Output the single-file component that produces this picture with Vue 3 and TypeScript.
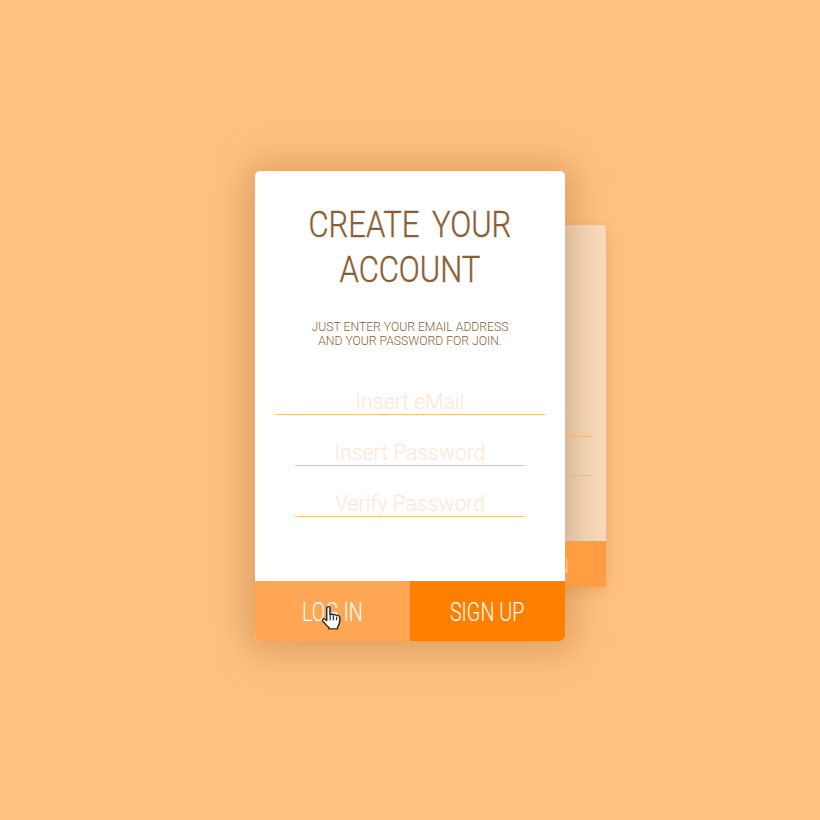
<script setup lang="ts">
const fields: { label: string; wide: boolean }[] = [
  { label: 'Insert eMail', wide: true },
  { label: 'Insert Password', wide: false },
  { label: 'Verify Password', wide: false },
]
</script>

<template>
  <main class="page">
    <section class="stack">
      <aside class="back-card">
        <div class="back-body">
          <span class="back-line first"></span>
          <span class="back-line second"></span>
        </div>
        <div class="back-foot"><span class="back-letter">N</span></div>
      </aside>
      <article class="card">
        <div class="body">
          <h1 class="title"><span>CREATE YOUR</span><span>ACCOUNT</span></h1>
          <p class="intro">JUST ENTER YOUR EMAIL ADDRESS<br />AND YOUR PASSWORD FOR JOIN.</p>
          <div class="fields">
            <div v-for="f in fields" :key="f.label" class="field" :class="{ wide: f.wide }">{{ f.label }}</div>
          </div>
        </div>
        <div class="actions">
          <div class="action login"><span>LOG IN</span></div>
          <div class="action signup"><span>SIGN UP</span></div>
        </div>
        <svg class="cursor" viewBox="1.500 0.500 15 23" width="19" height="25" preserveAspectRatio="none" aria-hidden="true">
          <path d="M5.200 2.300c0-1.600 2.600-1.600 2.600 0v6.200c.9-.6 2.100-.5 2.600.3.8-.5 2-.3 2.500.5.9-.5 2.300 0 2.500 1.200.3 2 .2 4.500-.3 6.300-.4 1.400-.9 2.300-1.300 3.300v1.400H6.900v-1.300c-1.500-1.200-3.300-3.700-4.900-5.900-.9-1.300.7-2.700 1.900-1.700l1.300 1.200z" fill="#fff" stroke="#333" stroke-width="1.250" stroke-linejoin="round" />
          <path d="M8 9v4.500M10.500 9.500v4M13 10.500v3" fill="none" stroke="#333" stroke-width="1" />
        </svg>
      </article>
    </section>
  </main>
</template>

<style scoped>
.page {
  width: 820px;
  height: 820px;
  background: #ffc182;
  display: flex;
  justify-content: center;
  padding-top: 171px;
  box-sizing: border-box;
  font-family: Roboto, "Liberation Sans", sans-serif;
  overflow: hidden;
}
.stack {
  position: relative;
  width: 310px;
  height: 470px;
}
.stack::before {
  content: "";
  position: absolute;
  inset: 0;
  border-radius: 8px;
  box-shadow: 0 2px 34px 10px rgba(170, 110, 50, 0.38);
}
.back-card {
  position: absolute;
  left: 81px;
  top: 54px;
  width: 270px;
  height: 362px;
  border-radius: 4px;
  overflow: hidden;
  display: flex;
  flex-direction: column;
  box-shadow: 0 4px 14px rgba(150, 90, 30, 0.2);
}
.back-body {
  position: relative;
  flex: 1;
  background: linear-gradient(90deg, #dcbb9b 229px, #f0d0ae 250px, #fbdbbb 270px);
}
.back-line {
  position: absolute;
  right: 15px;
  width: 60px;
  height: 1px;
  background: #f5b478;
}
.first { top: 211px; }
.second { top: 250px; }
.back-foot {
  height: 46px;
  background: #ff9d42;
  position: relative;
}
.back-letter {
  position: absolute;
  left: 219px;
  top: 13px;
  font-size: 20px;
  font-weight: 300;
  color: #ffc48c;
}
.card {
  position: absolute;
  inset: 0;
  border-radius: 5px;
  overflow: hidden;
  background: #fff;
  display: flex;
  flex-direction: column;
}
.body {
  flex: 1;
  display: flex;
  flex-direction: column;
  align-items: center;
  padding-top: 32px;
}
.title {
  margin: 0;
  display: flex;
  flex-direction: column;
  align-items: center;
  color: #8a5f37;
  font-size: 36px;
  line-height: 45px;
  font-weight: 300;
  -webkit-text-stroke: 0.4px #8a5f37;
  word-spacing: 6px;
  transform: scaleX(0.86);
  white-space: nowrap;
}
.intro {
  margin: 27px 0 0;
  color: #8a5f37;
  font-size: 12.2px;
  line-height: 14px;
  font-weight: 300;
  text-align: center;
  white-space: nowrap;
}
.fields {
  margin-top: 43px;
  display: flex;
  flex-direction: column;
  align-items: center;
  gap: 27px;
}
.field {
  width: 230px;
  height: 23px;
  line-height: 22px;
  border-bottom: 1px solid #ffc182;
  color: #ffe6cf;
  font-size: 21.200px;
  font-weight: 300;
  text-align: center;
  white-space: nowrap;
}
.field.wide { width: 270px; }
.actions {
  height: 60px;
  display: flex;
}
.action {
  width: 155px;
  display: flex;
  align-items: center;
  justify-content: center;
  padding-top: 2px;
  box-sizing: border-box;
  color: #fff;
  font-size: 25px;
  font-weight: 300;
}
.action span {
  display: inline-block;
  transform: scaleX(0.79);
  white-space: nowrap;
}
.login { background: #ffa755; }
.signup { background: #ff7f00; }
.cursor {
  position: absolute;
  left: 67px;
  top: 435px;
}
</style>
